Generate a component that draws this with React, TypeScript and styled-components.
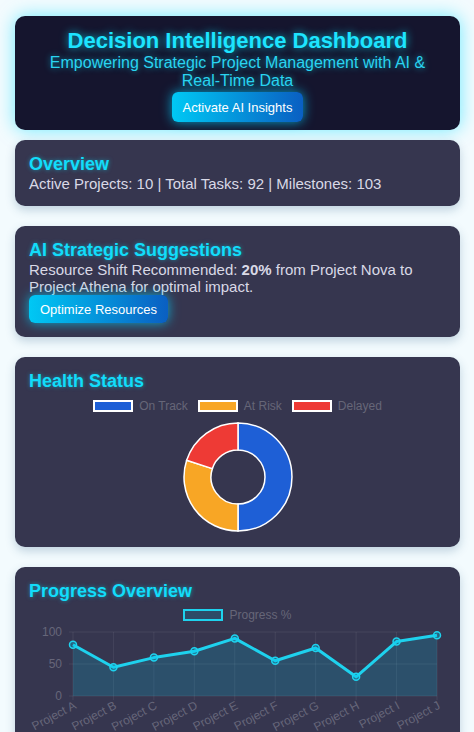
import styled, { createGlobalStyle } from "styled-components";

const GlobalStyle = createGlobalStyle`
	body {
		margin: 0;
		background: #f3fbfe;
		font-family: "Liberation Sans", Arial, sans-serif;
	}
`;

const Page = styled.div`
	padding: 16px 14px 0 15px;
	display: flex;
	flex-direction: column;
`;

const Header = styled.header`
	background: #15152e;
	border-radius: 10px;
	padding: 12px 16px 8px;
	text-align: center;
	box-shadow: 0 0 18px rgba(0, 220, 255, 0.55);
	margin-bottom: 10px;
`;

const Title = styled.h1`
	margin: 0;
	font-size: 22px;
	line-height: 26px;
	color: #1de4ff;
	text-shadow: 0 0 8px rgba(0, 229, 255, 0.8);
`;

const Subtitle = styled.p`
	margin: 0;
	font-size: 16px;
	line-height: 18px;
	color: #2ad4f0;
	text-shadow: 0 0 6px rgba(0, 229, 255, 0.6);
`;

const GlowButton = styled.button`
	border: none;
	border-radius: 6px;
	background: linear-gradient(90deg, #00c8f4, #0a5fc2);
	color: #fff;
	font-family: "Liberation Sans", Arial, sans-serif;
	font-size: 13px;
	height: ${(p: { $h: number }) => p.$h}px;
	padding: 0 11px;
	box-shadow: 0 0 12px rgba(0, 210, 255, 0.75);
	cursor: pointer;
`;

const HeaderButton = styled(GlowButton)`
	margin-top: 2px;
`;

const Card = styled.section`
	background: #36364f;
	border-radius: 10px;
	padding: 13px 14px 14px;
	margin-bottom: 20px;
	box-shadow: 0 4px 10px rgba(40, 90, 130, 0.25);
	color: #dcdce8;
`;

const CardTitle = styled.h2`
	margin: 0;
	font-size: 18px;
	line-height: 22px;
	color: #12dcfa;
	text-shadow: 0 0 4px rgba(0, 229, 255, 0.5);
`;

const Text = styled.p`
	margin: 0;
	font-size: 15px;
	line-height: 17px;
	color: #d9d9e6;
`;

const Legend = styled.div`
	display: flex;
	justify-content: center;
	align-items: center;
	gap: 10px;
	margin-top: ${(p: { $mt: number }) => p.$mt}px;
	font-size: 12px;
	color: #666678;
`;

const LegendItem = styled.span`
	display: flex;
	align-items: center;
	gap: 6px;
`;

const Swatch = styled.span<{ $fill: string; $border: string }>`
	width: 36px;
	height: 8px;
	background: ${(p) => p.$fill};
	border: 2px solid ${(p) => p.$border};
`;

const ChartBox = styled.div`
	display: flex;
	justify-content: center;
	margin-top: ${(p: { $mt: number }) => p.$mt}px;
`;

const health = [
	{ label: "On Track", value: 50, color: "#1e5fd6" },
	{ label: "At Risk", value: 30, color: "#f8a625" },
	{ label: "Delayed", value: 20, color: "#ee3a35" },
];

const progress = [80, 45, 60, 70, 90, 55, 75, 30, 85, 95];
const projects = "ABCDEFGHIJ".split("").map((c) => `Project ${c}`);

const polar = (r: number, deg: number) => {
	const a = ((deg - 90) * Math.PI) / 180;
	return [55 + r * Math.cos(a), 55 + r * Math.sin(a)];
};

const arc = (start: number, end: number, ro: number, ri: number) => {
	const large = end - start > 180 ? 1 : 0;
	const [x1, y1] = polar(ro, start);
	const [x2, y2] = polar(ro, end);
	const [x3, y3] = polar(ri, end);
	const [x4, y4] = polar(ri, start);
	return `M${x1} ${y1} A${ro} ${ro} 0 ${large} 1 ${x2} ${y2} L${x3} ${y3} A${ri} ${ri} 0 ${large} 0 ${x4} ${y4} Z`;
};

const Donut = () => {
	let angle = 0;
	return (
		<svg width="112" height="112" viewBox="-1 -1 112 112">
			{health.map((h) => {
				const start = angle;
				angle += (h.value / 100) * 360;
				return (
					<path
						key={h.label}
						d={arc(start, angle, 54, 27)}
						fill={h.color}
						stroke="#fff"
						strokeWidth={1.5}
					/>
				);
			})}
		</svg>
	);
};

// plot area inside the svg
const L = 44;
const R = 408;
const T = 8;
const B = 72;

const LineChart = () => {
	const step = (R - L) / (progress.length - 1);
	const pts = progress.map((v, i) => [L + i * step, B - (v / 100) * (B - T)]);
	const line = pts.map((p) => p.join(",")).join(" ");
	const area = `${L},${B} ${line} ${R},${B}`;
	return (
		<svg width="417" height="112" style={{ display: "block" }}>
			{pts.map(([x], i) => (
				<line key={i} x1={x} y1={T} x2={x} y2={B + 4} stroke="rgba(255,255,255,0.07)" />
			))}
			{[0, 50, 100].map((v) => {
				const y = B - (v / 100) * (B - T);
				return (
					<g key={v}>
						<line x1={L - 4} y1={y} x2={R} y2={y} stroke="rgba(255,255,255,0.08)" />
						<text x={33} y={y + 4} fontSize="12" fill="#66667a" textAnchor="end">
							{v}
						</text>
					</g>
				);
			})}
			<polygon points={area} fill="rgba(0, 200, 240, 0.18)" />
			<polyline points={line} fill="none" stroke="#1ed2ee" strokeWidth={3} strokeLinejoin="round" />
			{pts.map(([x, y], i) => (
				<circle key={i} cx={x} cy={y} r={3.5} fill="rgba(0,200,240,0.3)" stroke="#1ed2ee" strokeWidth={1.5} />
			))}
			{projects.map((p, i) => (
				<text
					key={p}
					x={L + i * step + 4}
					y={B + 12}
					fontSize="12"
					fill="#66667a"
					textAnchor="end"
					transform={`rotate(-28 ${L + i * step + 4} ${B + 12})`}
				>
					{p}
				</text>
			))}
		</svg>
	);
};

export default function App() {
	return (
		<>
			<GlobalStyle />
			<Page>
				<Header>
					<Title>Decision Intelligence Dashboard</Title>
					<Subtitle>Empowering Strategic Project Management with AI &amp; Real-Time Data</Subtitle>
					<HeaderButton $h={30}>Activate AI Insights</HeaderButton>
				</Header>

				<Card>
					<CardTitle>Overview</CardTitle>
					<Text>Active Projects: 10 | Total Tasks: 92 | Milestones: 103</Text>
				</Card>

				<Card>
					<CardTitle>AI Strategic Suggestions</CardTitle>
					<Text>
						Resource Shift Recommended: <strong>20%</strong> from Project Nova to Project Athena for
						optimal impact.
					</Text>
					<GlowButton $h={28}>Optimize Resources</GlowButton>
				</Card>

				<Card>
					<CardTitle>Health Status</CardTitle>
					<Legend $mt={7}>
						{health.map((h) => (
							<LegendItem key={h.label}>
								<Swatch $fill={h.color} $border="#fff" />
								{h.label}
							</LegendItem>
						))}
					</Legend>
					<ChartBox $mt={8}>
						<Donut />
					</ChartBox>
				</Card>

				<Card>
					<CardTitle>Progress Overview</CardTitle>
					<Legend $mt={6}>
						<LegendItem>
							<Swatch $fill="rgba(0,200,240,0.15)" $border="#1ed2ee" />
							Progress %
						</LegendItem>
					</Legend>
					<ChartBox $mt={2}>
						<LineChart />
					</ChartBox>
				</Card>
			</Page>
		</>
	);
}
